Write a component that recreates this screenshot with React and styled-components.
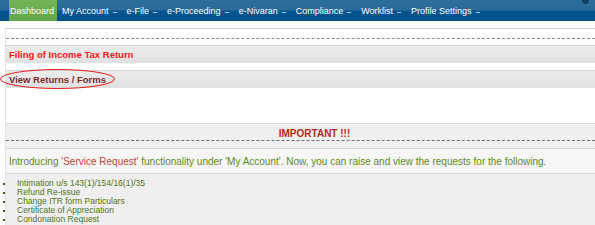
import React from 'react';
import styled, { createGlobalStyle } from 'styled-components';

const GlobalStyle = createGlobalStyle`
  html, body {
    margin: 0;
    padding: 0;
    background: #fff;
    font-family: "Liberation Sans", Arial, sans-serif;
    overflow: hidden;
  }
`;

const Page = styled.div`
  width: 595px;
  height: 225px;
  overflow: hidden;
`;

const NavBar = styled.div`
  position: relative;
  display: flex;
  align-items: stretch;
  height: 21px;
  padding-left: 9px;
  background: linear-gradient(to bottom, #2f6f9c 0%, #2a6a98 48%, #05558f 52%, #04528c 100%);
`;

const NavItem = styled.div`
  display: flex;
  align-items: center;
  padding: ${props => props.active ? '0 3px 0 1px' : '0 5px'};
  background: ${props => props.active ? 'linear-gradient(to bottom, #72b457, #62a64a)' : 'transparent'};
  color: #fff;
  font-size: 9px;
  white-space: nowrap;
`;

const Caret = styled.span`
  display: inline-block;
  width: 4px;
  height: 1px;
  margin-left: 4px;
  margin-top: 4px;
  background: #a9c0d4;
`;

const Blob = styled.span`
  position: absolute;
  right: 6px;
  top: -3px;
  width: 7px;
  height: 7px;
  border-radius: 50%;
  background: #123f63;
`;

const Content = styled.div`
  margin: 7px 0 0 5px;
  border-top: 1px solid #d4d4d4;
  border-left: 1px solid #e2e2e2;
  padding-top: 9px;
`;

const Dashed = styled.div`
  border-top: 1px dashed #8a8a8a;
  margin-bottom: 6px;
`;

const Bar = styled.div`
  position: relative;
  display: flex;
  align-items: center;
  height: 17px;
  margin-bottom: 7px;
  padding-left: 3px;
  border-top: 1px solid #d6d6d6;
  background: linear-gradient(to bottom, #ececec, #e0e0e0);
  color: ${props => props.color};
  font-size: 9.5px;
  font-weight: bold;
`;

const Ellipse = styled.svg`
  position: absolute;
  left: -6px;
  top: -2px;
  overflow: visible;
`;

const Spacer = styled.div`
  height: 28px;
`;

const Notice = styled.div`
  background: #efefef;
  border-top: 1px solid #dcdcdc;
  height: 120px;
`;

const NoticeHead = styled.div`
  height: 16px;
  padding-left: 28px;
  border-bottom: 1px dashed #6f6f6f;
  display: flex;
  align-items: flex-end;
  justify-content: center;
  color: #b42a1a;
  font-size: 10px;
  font-weight: bold;
  line-height: 12px;
`;

const Intro = styled.div`
  margin-top: 7px;
  height: 24px;
  display: flex;
  align-items: center;
  padding-left: 3px;
  background: #f6f6f6;
  border-top: 1px solid #d6d6d6;
  border-bottom: 1px solid #d6d6d6;
  color: #5d8a1c;
  font-size: 10px;
  white-space: nowrap;
`;

const Highlight = styled.span`
  color: #c0443a;
`;

const List = styled.ul`
  list-style: none;
  margin: 5px 0 0 -4px;
  padding: 0;
`;

const Item = styled.li`
  display: flex;
  align-items: center;
  height: 9px;
  color: #51731c;
  font-size: 8.5px;
  line-height: 9px;
`;

const Bullet = styled.span`
  width: 2px;
  height: 2px;
  margin: 1px 12px 0 1px;
  background: #3f5a18;
`;

const menu = ['My Account', 'e-File', 'e-Proceeding', 'e-Nivaran', 'Compliance', 'Worklist', 'Profile Settings'];

const requests = [
  'Intimation u/s 143(1)/154/16(1)/35',
  'Refund Re-issue',
  'Change ITR form Particulars',
  'Certificate of Appreciation',
  'Condonation Request',
];

export default function App() {
  return (
    <Page>
      <GlobalStyle />
      <NavBar>
        <NavItem active>Dashboard</NavItem>
        {menu.map(m => (
          <NavItem key={m}>
            {m}
            <Caret />
          </NavItem>
        ))}
        <Blob />
      </NavBar>
      <Content>
        <Dashed />
        <Bar color="#f01818">Filing of Income Tax Return</Bar>
        <Bar color="#7a2a2a">
          View Returns / Forms
          <Ellipse width="116" height="20" viewBox="0 0 116 20">
            <ellipse cx="57.5" cy="10" rx="57" ry="9.5" fill="none" stroke="#e01a1a" strokeWidth="1" />
          </Ellipse>
        </Bar>
        <Spacer />
        <Notice>
          <NoticeHead>IMPORTANT !!!</NoticeHead>
          <Intro>
            Introducing&nbsp;<Highlight>'Service Request'</Highlight>&nbsp;functionality under 'My Account'. Now, you can raise and view the requests for the following.
          </Intro>
          <List>
            {requests.map(r => (
              <Item key={r}>
                <Bullet />
                {r}
              </Item>
            ))}
          </List>
        </Notice>
      </Content>
    </Page>
  );
}
